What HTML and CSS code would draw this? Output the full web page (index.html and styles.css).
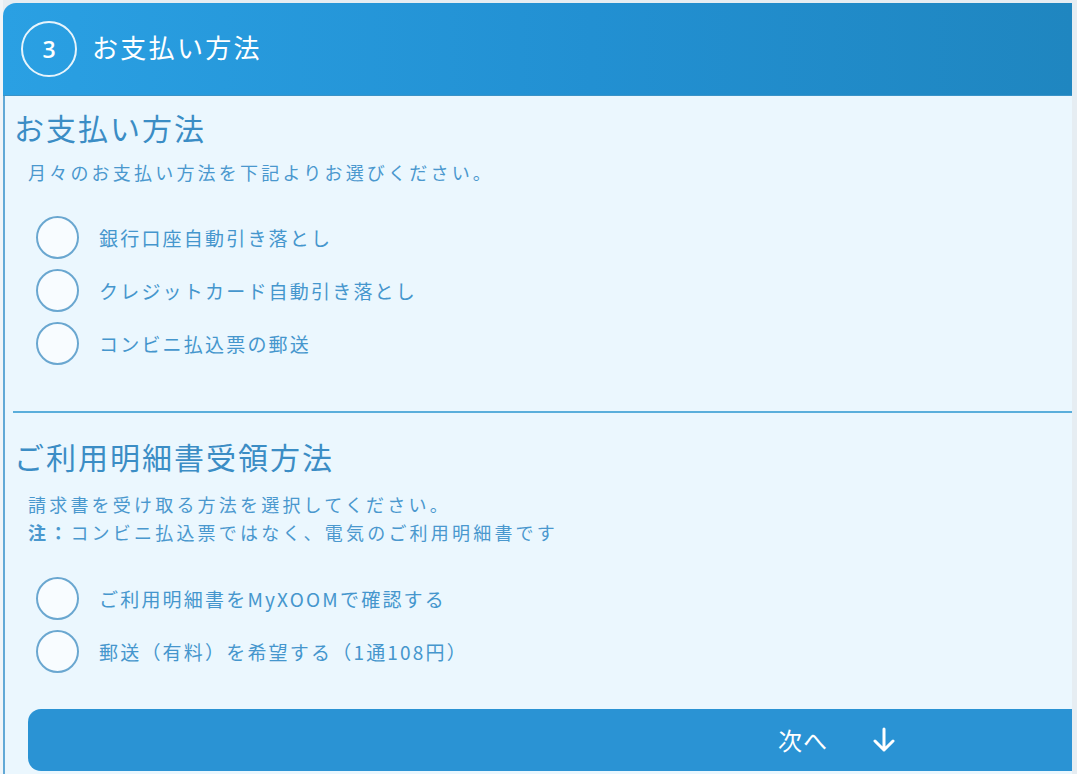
FILE: index.html
```html
<!DOCTYPE html>
<html lang="ja">
<head>
<meta charset="utf-8">
<title>お支払い方法</title>
<link rel="stylesheet" href="styles.css">
</head>
<body>
<div class="page">
  <section class="panel">
    <header class="panel-header">
      <span class="step">3</span>
      <span class="panel-title">お支払い方法</span>
    </header>
    <div class="panel-body">
      <h2 class="sec-title">お支払い方法</h2>
      <p class="sec-desc">月々のお支払い方法を下記よりお選びください。</p>
      <ul class="options first">
        <li class="option"><span class="radio"></span><span class="label">銀行口座自動引き落とし</span></li>
        <li class="option"><span class="radio"></span><span class="label">クレジットカード自動引き落とし</span></li>
        <li class="option"><span class="radio"></span><span class="label">コンビニ払込票の郵送</span></li>
      </ul>
      <hr class="divider">
      <h2 class="sec-title second">ご利用明細書受領方法</h2>
      <p class="sec-desc lines">請求書を受け取る方法を選択してください。<br><b>注：</b>コンビニ払込票ではなく、電気のご利用明細書です</p>
      <ul class="options">
        <li class="option"><span class="radio"></span><span class="label">ご利用明細書をMyXOOMで確認する</span></li>
        <li class="option"><span class="radio"></span><span class="label">郵送（有料）を希望する（1通108円）</span></li>
      </ul>
      <button class="next" type="button">
        <span class="next-text">次へ</span>
        <svg class="next-arrow" width="22" height="26" viewBox="0 0 22 26" aria-hidden="true">
          <path d="M11 2 V23 M2 14 L11 23 L20 14" fill="none" stroke="#ffffff" stroke-width="3" stroke-linecap="round" stroke-linejoin="round"/>
        </svg>
      </button>
    </div>
  </section>
</div>
</body>
</html>
```
FILE: styles.css
```css
html, body {
  margin: 0;
  padding: 0;
  height: 100%;
}
body {
  background: #e7eef3;
  font-family: "Noto Sans CJK JP", "Noto Sans", sans-serif;
  overflow: hidden;
}
.page {
  width: 1077px;
  height: 774px;
  padding: 3px 0 0 3px;
  box-sizing: border-box;
  background: linear-gradient(to right, #f1f5f8 0, #f1f5f8 3px, #e6edf2 3px);
}
.panel {
  width: 1069px;
  height: 771px;
  background: #ebf7fe;
  border-top-left-radius: 13px;
  overflow: hidden;
  display: flex;
  flex-direction: column;
}
.panel-header {
  height: 93px;
  flex: none;
  display: flex;
  align-items: center;
  padding-left: 18px;
  background: linear-gradient(to right, #2aa0e3 0%, #2290d2 55%, #1f86c0 100%);
  border-bottom: 1px solid #3a93c7;
  box-sizing: border-box;
}
.step {
  width: 52px;
  height: 52px;
  border: 2px solid #e6f4fc;
  border-radius: 50%;
  display: flex;
  align-items: center;
  justify-content: center;
  color: #ffffff;
  font-family: "Open Sans", "Noto Sans", sans-serif;
  font-size: 23px;
  font-weight: 600;
  flex: none;
}
.panel-title {
  margin-left: 15px;
  color: #ffffff;
  font-size: 26px;
  font-weight: 400;
  letter-spacing: 2.3px;
  line-height: 1;
  margin-top: -4px;
}
.panel-body {
  flex: 1;
  border-left: 2px solid #62a9d6;
  display: flex;
  flex-direction: column;
}
.sec-title {
  margin: 11px 0 0 9px;
  font-size: 30px;
  font-weight: 400;
  line-height: 40px;
  letter-spacing: 2px;
  color: #3b8dc5;
}
.sec-title.second {
  margin-top: 23px;
}
.sec-desc {
  margin: 11px 0 0 23px;
  font-size: 18px;
  line-height: 28px;
  letter-spacing: 3.2px;
  color: #4a98ce;
}
.sec-desc.lines {
  margin-top: 14px;
}
.sec-desc b {
  font-weight: 700;
}
.options {
  list-style: none;
  margin: 25px 0 0 0;
  padding: 0 0 0 31px;
}
.options:not(.first) {
  margin-top: 26px;
}
.option {
  height: 53px;
  display: flex;
  align-items: center;
}
.radio {
  width: 39px;
  height: 39px;
  border: 2px solid #6aa7d0;
  border-radius: 50%;
  background: #f8fcff;
  flex: none;
}
.label {
  margin-left: 20px;
  font-size: 19px;
  font-weight: 400;
  letter-spacing: 2.2px;
  color: #4596cd;
  line-height: 1;
}
.divider {
  margin: 41px 0 0 8px;
  border: none;
  height: 2px;
  background: #5aaedb;
}
.next {
  margin: 31px 0 0 23px;
  height: 62px;
  border: none;
  border-radius: 13px 0 0 13px;
  background: #2a93d4;
  display: flex;
  align-items: center;
  justify-content: flex-end;
  padding: 0 177px 0 0;
  font-family: inherit;
  cursor: pointer;
}
.next-text {
  color: #ffffff;
  font-size: 24px;
  letter-spacing: 1px;
  line-height: 1;
}
.next-arrow {
  margin-left: 45px;
}
```
